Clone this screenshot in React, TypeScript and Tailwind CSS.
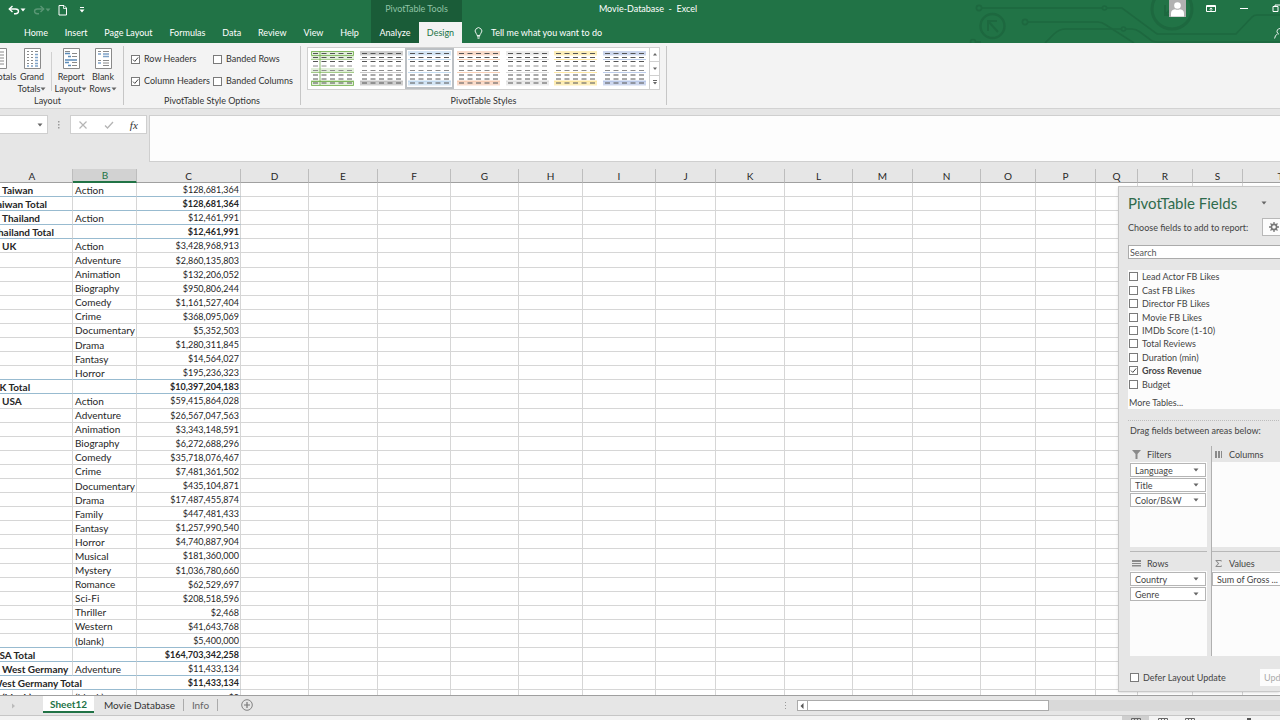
import { ReactNode, useState } from 'react';

type CellRow = {
  country?: string;
  genre?: string;
  value: string;
  total?: boolean;
};

const ROWS: CellRow[] = [
  { country: 'Taiwan', genre: 'Action', value: '$128,681,364' },
  { country: 'Taiwan Total', value: '$128,681,364', total: true },
  { country: 'Thailand', genre: 'Action', value: '$12,461,991' },
  { country: 'Thailand Total', value: '$12,461,991', total: true },
  { country: 'UK', genre: 'Action', value: '$3,428,968,913' },
  { genre: 'Adventure', value: '$2,860,135,803' },
  { genre: 'Animation', value: '$132,206,052' },
  { genre: 'Biography', value: '$950,806,244' },
  { genre: 'Comedy', value: '$1,161,527,404' },
  { genre: 'Crime', value: '$368,095,069' },
  { genre: 'Documentary', value: '$5,352,503' },
  { genre: 'Drama', value: '$1,280,311,845' },
  { genre: 'Fantasy', value: '$14,564,027' },
  { genre: 'Horror', value: '$195,236,323' },
  { country: 'UK Total', value: '$10,397,204,183', total: true },
  { country: 'USA', genre: 'Action', value: '$59,415,864,028' },
  { genre: 'Adventure', value: '$26,567,047,563' },
  { genre: 'Animation', value: '$3,343,148,591' },
  { genre: 'Biography', value: '$6,272,688,296' },
  { genre: 'Comedy', value: '$35,718,076,467' },
  { genre: 'Crime', value: '$7,481,361,502' },
  { genre: 'Documentary', value: '$435,104,871' },
  { genre: 'Drama', value: '$17,487,455,874' },
  { genre: 'Family', value: '$447,481,433' },
  { genre: 'Fantasy', value: '$1,257,990,540' },
  { genre: 'Horror', value: '$4,740,887,904' },
  { genre: 'Musical', value: '$181,360,000' },
  { genre: 'Mystery', value: '$1,036,780,660' },
  { genre: 'Romance', value: '$62,529,697' },
  { genre: 'Sci-Fi', value: '$208,518,596' },
  { genre: 'Thriller', value: '$2,468' },
  { genre: 'Western', value: '$41,643,768' },
  { genre: '(blank)', value: '$5,400,000' },
  { country: 'USA Total', value: '$164,703,342,258', total: true },
  { country: 'West Germany', genre: 'Adventure', value: '$11,433,134' },
  { country: 'West Germany Total', value: '$11,433,134', total: true },
  { country: '(blank)', genre: '(blank)', value: '$0' },
];

const COLUMNS = [
  { name: 'A', width: 73 },
  { name: 'B', width: 64 },
  { name: 'C', width: 104 },
  { name: 'D', width: 68 },
  { name: 'E', width: 69 },
  { name: 'F', width: 73 },
  { name: 'G', width: 68 },
  { name: 'H', width: 64 },
  { name: 'I', width: 73 },
  { name: 'J', width: 60 },
  { name: 'K', width: 69 },
  { name: 'L', width: 68 },
  { name: 'M', width: 60 },
  { name: 'N', width: 68 },
  { name: 'O', width: 55 },
  { name: 'P', width: 60 },
  { name: 'Q', width: 42 },
  { name: 'R', width: 55 },
  { name: 'S', width: 50 },
  { name: 'T', width: 76 },
];

const TABS = ['Home', 'Insert', 'Page Layout', 'Formulas', 'Data', 'Review', 'View', 'Help'];

const FIELDS = [
  'Lead Actor FB Likes',
  'Cast FB Likes',
  'Director FB Likes',
  'Movie FB Likes',
  'IMDb Score (1-10)',
  'Total Reviews',
  'Duration (min)',
  'Gross Revenue',
  'Budget',
];

const STYLES = [
  { name: 'Light green', band: '#e2efda', line: '#70ad47', outlined: true },
  { name: 'Gray', band: '#cfcfcf', line: '#a6a6a6' },
  { name: 'Light blue', band: '#d5e6f5', line: '#9bc2e6' },
  { name: 'Orange', band: '#fadccb', line: '#f4b084' },
  { name: 'Light gray', band: '#ececec', line: '#c9c9c9' },
  { name: 'Gold', band: '#fdeeb9', line: '#ffd966' },
  { name: 'Blue', band: '#cdd7ee', line: '#8ea9db' },
];

function Caret({ className = 'text-[#666]' }: { className?: string }) {
  return (
    <svg viewBox="0 0 6 4" className={`h-1 w-1.5 shrink-0 ${className}`} aria-hidden="true">
      <path d="M0.5 0.5h5L3 3.5z" fill="currentColor" />
    </svg>
  );
}

interface CheckProps {
  label: string;
  defaultChecked?: boolean;
  boldWhenChecked?: boolean;
}

function Check({ label, defaultChecked = false, boldWhenChecked }: CheckProps) {
  const [checked, setChecked] = useState(defaultChecked);
  return (
    <label className={`flex items-center gap-1 whitespace-nowrap ${boldWhenChecked && checked ? 'font-bold' : ''}`}>
      <span className="relative flex h-[9px] w-[9px] shrink-0">
        <input
          type="checkbox"
          checked={checked}
          onChange={e => setChecked(e.target.checked)}
          className="h-[9px] w-[9px] appearance-none border border-[#7a7a7a] bg-white"
        />
        {checked && (
          <svg viewBox="0 0 9 9" className="pointer-events-none absolute inset-0" aria-hidden="true">
            <path d="M2 4.6 3.8 6.4 7.2 2.4" fill="none" stroke="#444" strokeWidth="1" />
          </svg>
        )}
      </span>
      {label}
    </label>
  );
}

function Circuit() {
  return (
    <svg
      viewBox="0 0 320 43"
      className="pointer-events-none absolute top-0 right-0 h-[43px] w-80"
      fill="none"
      stroke="#1d683f"
      strokeWidth="1.6"
      aria-hidden="true"
    >
      <circle cx="19" cy="8" r="2.6" />
      <path d="M22 8h120M147 8h15l35 26h79l16-17q2-2 5-2h23" />
      <circle cx="144.500" cy="8" r="2" />
      <circle cx="32.500" cy="26" r="12" strokeWidth="2.4" />
      <path d="M38 32 28 21M28 31V21h9" strokeWidth="2" />
      <circle cx="65" cy="22" r="2.600" />
      <path d="M68 22h70q4 0 8 3l28 18" />
      <path d="M85 43l9-9q5-5 12-5h55M166 29h6q4 0 8 3l12 9q3 1 6 1h122" />
      <circle cx="163.500" cy="29" r="2" />
      <circle cx="212" cy="9" r="20" strokeWidth="3" />
      <path d="M205 5v10h8M205 15l8-8" strokeWidth="2" />
      <circle cx="13" cy="42" r="2.500" />
      <path d="M16 42h5" />
    </svg>
  );
}

function TitleBar() {
  return (
    <div className="relative flex h-[22px] items-start">
      <div className="flex flex-1 items-center gap-[7px] pt-1 pl-2 text-white">
        <button type="button" aria-label="Undo" className="flex items-center">
          <svg viewBox="0 0 12 10" className="h-2.5 w-3" fill="none" stroke="currentColor">
            <path d="M1.500 4h6q3 0 3 2.300T7.500 8.800H6" strokeWidth="1.400" />
            <path d="M4.500 1 1.300 4l3.200 3" strokeWidth="1.400" />
          </svg>
          <Caret className="text-white" />
        </button>
        <button type="button" aria-label="Redo" className="flex items-center opacity-25">
          <svg viewBox="0 0 12 10" className="h-2.5 w-3" fill="none" stroke="currentColor">
            <path d="M10.500 4h-6q-3 0-3 2.300t3 2.500H6" strokeWidth="1.400" />
            <path d="m7.500 1 3.200 3-3.200 3" strokeWidth="1.400" />
          </svg>
          <Caret className="text-white" />
        </button>
        <button type="button" aria-label="New">
          <svg viewBox="0 0 10 12" className="h-3 w-2.5" fill="none" stroke="currentColor">
            <path d="M1 1.500h5l2.500 2.500v7H1z" />
            <path d="M5.500 1.500V4.500h3" strokeWidth="0.800" />
          </svg>
        </button>
        <button type="button" aria-label="Customize Quick Access Toolbar" className="ml-1">
          <svg viewBox="0 0 6 6" className="h-1.5 w-1.5" fill="currentColor">
            <path d="M1 0h4v1H1zM0.500 2.500h5L3 5.500z" />
          </svg>
        </button>
      </div>
      <h1 className="pr-4 pl-6 text-[9px] leading-[18px] whitespace-pre text-white">Movie-Database  -  Excel</h1>
      <div className="relative z-10 flex flex-1 items-start justify-end text-white">
        <svg viewBox="0 0 17 17" className="mr-5 h-[17px] w-[17px]" role="img" aria-label="Account">
          <path d="M0 0h17v17H0z" fill="#b1b1b1" />
          <circle cx="8.500" cy="5.500" r="3.300" fill="#fff" />
          <path d="M2 16.500v-3q0-4 4-4.300 2.500 1.300 5 0 4 .3 4 4.300v3z" fill="#fff" />
        </svg>
        <button type="button" aria-label="Ribbon Display Options" className="mt-1 mr-6">
          <svg viewBox="0 0 10 9" className="h-[9px] w-2.5" fill="none" stroke="currentColor">
            <path d="M.5 1.500h9v6h-9zM.5 2.500h9" />
            <path d="M5 7V4M3.500 5.300 5 3.900l1.500 1.400" strokeWidth="0.900" />
          </svg>
        </button>
        <button type="button" aria-label="Minimize" className="mt-1 mr-6">
          <svg viewBox="0 0 8 9" className="h-[9px] w-2" stroke="currentColor">
            <path d="M0 4.500h8" />
          </svg>
        </button>
        <button type="button" aria-label="Restore" className="mt-1">
          <svg viewBox="0 0 8 9" className="h-[9px] w-2" fill="none" stroke="currentColor">
            <path d="M1 2.500h5v5H1zM3 2.500v-1.500h5" />
          </svg>
        </button>
      </div>
    </div>
  );
}

function RibbonTabs() {
  return (
    <div className="relative flex h-[21px] items-stretch text-[9px] leading-[21px] text-white">
      <div className="flex w-[371px] shrink-0 justify-between pr-3 pl-6">
        {TABS.map(t => (
          <button key={t} type="button">
            {t}
          </button>
        ))}
      </div>
      <button type="button" className="w-12 shrink-0 bg-[#1a5c38]">
        Analyze
      </button>
      <button type="button" className="w-[43px] shrink-0 bg-[#f3f3f3] text-[#217346]">
        Design
      </button>
      <button type="button" className="ml-3 flex items-center gap-2">
        <svg viewBox="0 0 9 12" className="h-3 w-[9px]" fill="none" stroke="currentColor" strokeWidth="0.900">
          <path d="M3 8.500q0-1.200-.9-2.200A3.300 3.300 0 1 1 6.900 6.300Q6 7.300 6 8.500zM3 9.800h3M3.500 11.200h2" />
        </svg>
        Tell me what you want to do
      </button>
      <div className="flex-1" />
      <button type="button" aria-label="Share" className="relative z-10">
        <svg viewBox="0 0 6 12" className="h-3 w-1.5" fill="none" stroke="currentColor" strokeWidth="0.900">
          <path d="M6 1.500A2.900 2.900 0 0 0 3.500 6L5 7.300M3.500 7Q1 8 .6 11.500" />
        </svg>
      </button>
    </div>
  );
}

function LayoutIcon({ kind }: { kind: 'sub' | 'grand' | 'report' | 'blank' }) {
  return (
    <svg viewBox="0 0 17 21" className="h-[21px] w-[17px]" fill="none" aria-hidden="true">
      <path d="M.5.5h16v20H.5z" fill="#fff" stroke="#8a8a8a" />
      {kind === 'grand' && (
        <>
          <path d="M3 3.500h2M7 3.500h2M11 3.500h3M3 6.500h2M7 6.500h2M3 9.500h2M7 9.500h2M3 12.500h2M7 12.500h2M3 15.500h2M7 15.500h2" stroke="#8a8a8a" />
          <path d="M11 6.500h3M11 9.500h3M11 12.500h3M11 15.500h3M3 18h2M7 18h2M11 18h3" stroke="#7fa3c8" strokeWidth="1.500" />
        </>
      )}
      {kind === 'sub' && <path d="M3 4h11M5 7h9M5 10h9M3 13h11M5 16h9" stroke="#8a8a8a" />}
      {kind === 'report' && (
        <>
          <path d="M2 3.500h5M9 5.500h5M9 8.500h5M9 14.500h5M9 17.500h5" stroke="#8a8a8a" />
          <path d="M2 5.500h5M5 8.500h3M2 12h12M2 14.500h4M5 17.500h3" stroke="#5b8bb8" strokeWidth="1.400" />
        </>
      )}
      {kind === 'blank' && (
        <>
          <path d="M3 3.500h3M8 3.500h6M3 12.500h3M8 12.500h6M8 15h6M8 17.500h6" stroke="#8a8a8a" />
          <path d="M3 6h3M8 6h6M8 8.500h6M3 15h3" stroke="#7fa3c8" strokeWidth="1.300" />
        </>
      )}
    </svg>
  );
}

function LayoutButton({ kind, top, bottom }: { kind: 'sub' | 'grand' | 'report' | 'blank'; top: string; bottom?: string }) {
  return (
    <button
      type="button"
      className={`flex shrink-0 flex-col items-center leading-3 whitespace-nowrap ${kind === 'sub' ? 'w-9' : 'w-8'}`}
    >
      <LayoutIcon kind={kind} />
      <span className="mt-0.5">{top}</span>
      {bottom && (
        <span className="flex items-center">
          {bottom}
          <Caret />
        </span>
      )}
    </button>
  );
}

function RibbonGroup({ title, className, children }: { title: string; className: string; children: ReactNode }) {
  return (
    <section className={`my-[3px] flex shrink-0 flex-col border-r border-[#c6c6c6] ${className}`} aria-label={title}>
      <div className="min-h-0 flex-1">{children}</div>
      <div className="text-center leading-[8px]">{title}</div>
    </section>
  );
}

function StyleThumb({ band, line, outlined }: { band: string; line: string; outlined?: boolean }) {
  const ys = [2.5, 6.5, 10.5, 15, 19.5, 24, 28, 32];
  return (
    <svg viewBox="0 0 43 35" className="h-[35px] w-[43px]" aria-hidden="true">
      <rect width="43" height="4.500" fill={band} />
      <rect y="30" width="43" height="4.500" fill={band} />
      {outlined && <rect y="17" width="43" height="4.500" fill={band} />}
      {outlined && <rect y="5" width="43" height="3" fill={band} />}
      <path d="M0 8.500h43M0 21.500h43M0 30h43" stroke={line} strokeWidth="0.600" />
      {outlined && <path d="M.5.500h42v4H.5zM.5 30.500h42v4H.5zM9 0v34" fill="none" stroke={line} strokeWidth="0.800" />}
      {ys.map((y, i) => (
        <path
          key={y}
          d={`M2 ${y}h5M10.500 ${y}h5M19 ${y}h5M27.500 ${y}h5M36 ${y}h5`}
          stroke={i === 3 || i === 4 ? '#8c8c8c' : '#555'}
        />
      ))}
    </svg>
  );
}

function Ribbon() {
  return (
    <div className="flex h-[66px] shrink-0 overflow-hidden border-b border-[#d2d2d2] bg-[#f3f3f3] text-[9px] text-[#333]">
      <RibbonGroup title="Layout" className="w-[124px] pr-7">
        <div className="-mr-6 flex justify-end pt-0.5">
          <LayoutButton kind="sub" top="Subtotals" />
          <LayoutButton kind="grand" top="Grand" bottom="Totals" />
          <div className="mx-[3px] my-1 w-px shrink-0 bg-[#d0d0d0]" />
          <LayoutButton kind="report" top="Report" bottom="Layout" />
          <LayoutButton kind="blank" top="Blank" bottom="Rows" />
        </div>
      </RibbonGroup>
      <RibbonGroup title="PivotTable Style Options" className="w-[177px]">
        <div className="grid grid-cols-[82px_1fr] gap-y-3 pt-2 pl-[7px] leading-[10px]">
          <Check label="Row Headers" defaultChecked />
          <Check label="Banded Rows" />
          <Check label="Column Headers" defaultChecked />
          <Check label="Banded Columns" />
        </div>
      </RibbonGroup>
      <RibbonGroup title="PivotTable Styles" className="w-[366px] px-1.5">
        <div className="mt-px flex h-[43px] border border-[#d0d0d0] bg-white">
          {STYLES.map((s, i) => (
            <button
              key={s.name}
              type="button"
              aria-label={s.name}
              className={`flex flex-1 items-center justify-center ${i === 2 ? 'bg-white outline-2 -outline-offset-2 outline-[#bcc0c4]' : ''}`}
            >
              <StyleThumb band={s.band} line={s.line} outlined={s.outlined} />
            </button>
          ))}
          <div className="flex w-2.5 flex-col divide-y divide-[#d0d0d0] border-l border-[#d0d0d0]">
            {['M1 4.500h4L3 2z', 'M1 2.500h4L3 5z', 'M1 1h4v1H1zM1 3h4L3 5.500z'].map((d, i) => (
              <button key={d} type="button" aria-label={['Scroll up', 'Scroll down', 'More'][i]} className="flex flex-1 items-center justify-center">
                <svg viewBox="0 0 6 7" className="h-[7px] w-1.5">
                  <path d={d} fill="#666" />
                </svg>
              </button>
            ))}
          </div>
        </div>
      </RibbonGroup>
    </div>
  );
}

function FormulaBar() {
  return (
    <div className="flex h-[60px] shrink-0 items-start pt-1.5 pb-[7px]">
      <div className="flex h-[19px] w-12 items-center justify-end border border-l-0 border-[#cfcfcf] bg-white">
        <input aria-label="Name box" className="w-0 flex-1 outline-none" />
        <button type="button" aria-label="Named ranges" className="mr-1">
          <Caret />
        </button>
      </div>
      <svg viewBox="0 0 2 8" className="mx-2.5 mt-1.5 h-2 w-0.5" fill="#9a9a9a" aria-hidden="true">
        <path d="M0 0h1.500v1.500H0zM0 3h1.500v1.500H0zM0 6h1.500v1.500H0z" />
      </svg>
      <div className="mr-0.5 flex h-[19px] w-[77px] items-center justify-around border border-[#cfcfcf] bg-white">
        <button type="button" aria-label="Cancel">
          <svg viewBox="0 0 8 8" className="h-2 w-2" stroke="#b5b5b5" fill="none" strokeWidth="1.200">
            <path d="m.5.5 7 7M7.500.5l-7 7" />
          </svg>
        </button>
        <button type="button" aria-label="Enter">
          <svg viewBox="0 0 10 8" className="h-2 w-2.5" stroke="#b5b5b5" fill="none" strokeWidth="1.300">
            <path d="m1 4.500 2.500 2.500L9 1" />
          </svg>
        </button>
        <button type="button" className="font-['Liberation_Serif',serif] text-[11px] leading-3 text-[#333] italic">
          fx
        </button>
      </div>
      <textarea aria-label="Formula bar" className="h-[47px] flex-1 resize-none border border-r-0 border-[#cfcfcf] bg-[#fdfdfd] outline-none" />
    </div>
  );
}

function Sheet() {
  return (
    <table className="h-[536px] w-full min-w-[1319px] table-fixed border-separate border-spacing-0 bg-white text-[10px] leading-[12px] text-[#262626]">
      <colgroup>
        {COLUMNS.map(c => (
          <col key={c.name} style={{ width: c.width }} />
        ))}
      </colgroup>
      <thead>
        <tr className="h-3.5">
          {COLUMNS.map(c => (
            <th
              key={c.name}
              scope="col"
              className={
                c.name === 'B'
                  ? 'h-3.5 border-r border-b-2 border-r-[#bdbdbd] border-b-[#217346] bg-[#d2d2d2] p-0 pl-px font-normal text-[#217346]'
                  : 'h-3.5 border-r border-b border-r-[#bdbdbd] border-b-[#a0a0a0] bg-[#e6e6e6] p-0 font-normal first:pr-2'
              }
            >
              {c.name}
            </th>
          ))}
        </tr>
      </thead>
      <tbody>
        {ROWS.map((row, i) => {
          const ruled = row.total || ROWS[i + 1]?.total;
          const line = ruled ? 'border-b-[#98bbd0]' : 'border-b-[#d6d6d6]';
          const wide = row.country === 'West Germany Total';
          return (
            <tr key={i}>
              <td
                colSpan={wide ? 2 : 1}
                className={`h-3.5 border-r border-b border-r-[#d6d6d6] p-0 font-bold whitespace-nowrap ${line} ${row.total ? '-indent-2' : 'indent-0.5'}`}
              >
                {row.country}
              </td>
              {!wide && (
                <td className={`border-r border-b border-r-[#d6d6d6] p-0 pl-0.5 whitespace-nowrap ${line}`}>{row.genre}</td>
              )}
              <td className={`border-r border-b border-r-[#d6d6d6] p-0 pt-px pr-px text-right text-[9px] ${line} ${row.total ? 'font-bold' : ''}`}>
                {row.value}
              </td>
              {COLUMNS.slice(3).map(c => (
                <td key={c.name} className="border-r border-b border-[#d6d6d6] p-0" />
              ))}
            </tr>
          );
        })}
      </tbody>
    </table>
  );
}

interface AreaProps {
  title: string;
  icon: ReactNode;
  items: string[];
}

function Area({ title, icon, items }: AreaProps) {
  return (
    <section className="flex flex-1 flex-col" aria-label={title}>
      <h3 className="flex h-4 shrink-0 items-center gap-1.5 pl-0.5">
        <svg viewBox="0 0 9 9" className="h-[9px] w-[9px]" fill="#8a8a8a" aria-hidden="true">
          {icon}
        </svg>
        {title}
      </h3>
      <div className="flex flex-1 flex-col gap-px bg-[#fcfcfc] pt-px pr-px">
        {items.map(item => (
          <button key={item} type="button" className="flex h-3.5 items-center justify-between border border-[#b5b5b5] bg-white pr-1.5 pl-1 whitespace-nowrap">
            {item}
            <Caret />
          </button>
        ))}
      </div>
    </section>
  );
}

function FieldsPanel() {
  return (
    <aside className="absolute top-[17px] right-0 h-[506px] w-[162px] overflow-hidden border border-r-0 border-[#c8c8c8] bg-[#e6e6e6] text-[9px] leading-[11px] text-[#444] shadow-sm">
      <div className="flex w-[200px] flex-col pl-[9px]">
        <h2 className="mt-1.5 flex items-center gap-6 text-[15px] leading-5 text-[#2f6b4c]">
          PivotTable Fields
          <Caret />
        </h2>
        <div className="mt-[5px] flex h-[18px] items-center justify-between">
          Choose fields to add to report:
          <button type="button" aria-label="Tools" className="flex h-[18px] w-[57px] items-center border border-[#b8b8b8] bg-[#fcfcfc] pl-1.5">
            <svg viewBox="0 0 10 10" className="h-2.5 w-2.5" fill="none" stroke="#777">
              <circle cx="5" cy="5" r="2.600" strokeWidth="1.600" />
              <path d="M5 0v2M5 8v2M0 5h2M8 5h2M1.500 1.500l1.400 1.400M7.100 7.100l1.400 1.400M8.500 1.500 7.100 2.900M2.900 7.100 1.500 8.500" strokeWidth="1.300" />
            </svg>
          </button>
        </div>
        <input
          type="search"
          aria-label="Search"
          placeholder="Search"
          className="mt-[9px] h-3.5 border border-[#ababab] bg-white pl-px text-[9px] outline-none placeholder:text-[#555]"
        />
        <div className="mt-[11px] h-[139px] bg-[#fcfcfc] pl-px">
          <div className="flex h-[121px] flex-col">
            {FIELDS.map(f => (
              <div key={f} className="flex flex-1 items-center">
                <Check label={f} defaultChecked={f === 'Gross Revenue'} boldWhenChecked />
              </div>
            ))}
          </div>
          <a href="#more" className="mt-1.5 block">
            More Tables...
          </a>
        </div>
        <div className="mt-[11px] border-t border-dotted border-[#bcbcbc]" />
        <p className="mt-1 pl-0.5">Drag fields between areas below:</p>
        <div className="mt-2.5 ml-0.5 grid h-[210px] grid-cols-[77px_1fr] grid-rows-[101px_109px]">
          <div className="flex">
            <Area title="Filters" items={['Language', 'Title', 'Color/B&W']} icon={<path d="M0 0h9L5.500 4v5h-2V4z" />} />
          </div>
          <div className="ml-1 flex border-l border-[#b0b0b0]">
            <Area title="Columns" items={[]} icon={<path d="M1 1h2v7H1zM4 1h2v7H4zM7 1h1v7H7z" />} />
          </div>
          <div className="mt-1 flex border-t border-[#b8b8b8] pt-[3px]">
            <Area title="Rows" items={['Country', 'Genre']} icon={<path d="M0 1h9v2H0zM0 4h9v1H0zM0 6h9v1.500H0z" />} />
          </div>
          <div className="ml-1 flex border-l border-[#b0b0b0]">
            <div className="mt-1 flex flex-1 border-t border-[#b8b8b8] pt-[3px]">
              <Area
                title="Values"
                items={['Sum of Gross ...']}
                icon={<path d="M1.500 1h6v1.800H6.800V1.900H3L5.200 4.400 2.900 7.100h4V6.200h.7V8H1.500V7.300L4 4.500 1.500 1.700z" />}
              />
            </div>
          </div>
        </div>
        <div className="mt-3 flex h-[18px] items-center justify-between pl-0.5">
          <Check label="Defer Layout Update" />
          <button type="button" disabled className="h-[17px] w-[59px] bg-[#fcfcfc] pl-1 text-left text-[#aaa]">
            Update
          </button>
        </div>
      </div>
    </aside>
  );
}

function SheetTabs() {
  return (
    <div className="flex h-5 shrink-0 items-stretch border-t border-[#9f9f9f] bg-[#e6e6e6] text-[10px] text-[#333]">
      <div className="flex w-[43px] items-center pl-3">
        <svg viewBox="0 0 4 6" className="h-1.5 w-1" fill="#bbb" aria-hidden="true">
          <path d="M0 .5v5L3 3z" />
        </svg>
      </div>
      <button type="button" className="mb-0.5 w-[51px] border-b-2 border-[#217346] bg-white pt-px font-bold text-[#217346]">
        Sheet12
      </button>
      <div className="mt-0.5 mb-1 flex items-center divide-x divide-[#ababab] leading-3">
        <button type="button" className="w-[90px] pl-0.5">
          Movie Database
        </button>
        <button type="button" className="w-[34px] text-[#666]">
          Info
        </button>
        <button type="button" aria-label="New sheet" className="pl-[23px]">
          <svg viewBox="0 0 12 12" className="h-3 w-3" fill="none" stroke="#777">
            <circle cx="6" cy="6" r="5.300" strokeWidth="0.900" />
            <path d="M6 3v6M3 6h6" strokeWidth="1.200" />
          </svg>
        </button>
      </div>
      <div className="ml-auto flex w-[39%] items-center gap-2.5 pl-1">
        <svg viewBox="0 0 2 8" className="h-2 w-0.5" fill="#9a9a9a" aria-hidden="true">
          <path d="M0 0h1v1H0zM0 3h1v1H0zM0 6h1v1H0z" />
        </svg>
        <div className="flex h-[11px] flex-1 bg-[#d9d9d9]">
          <button type="button" aria-label="Scroll left" className="flex w-[11px] items-center justify-center border border-[#ababab] bg-white">
            <svg viewBox="0 0 4 6" className="h-1.5 w-1" fill="#555">
              <path d="M3.500 0v6L.5 3z" />
            </svg>
          </button>
          <div className="w-1/2 border border-l-0 border-[#ababab] bg-white" />
        </div>
      </div>
    </div>
  );
}

function StatusBar() {
  return (
    <div className="flex h-[5px] shrink-0 justify-end overflow-hidden border-t border-[#c6c6c6] bg-[#f3f3f3] pr-[29px]">
      {[0, 1, 2].map(i => (
        <button
          key={i}
          type="button"
          aria-label={['Normal', 'Page Layout', 'Page Break Preview'][i]}
          className={`flex w-[27px] justify-center pt-0.5 ${i === 0 ? 'bg-[#cfcfcf]' : ''}`}
        >
          <svg viewBox="0 0 10 8" className="h-2 w-2.5" fill="none" stroke="#666">
            <path d="M.5.5h9v7h-9zM.5 3h9M3.500.5v7M6.500.5v7" />
          </svg>
        </button>
      ))}
      <div className="mt-0.5 ml-11 h-2 w-1 bg-[#555]" />
    </div>
  );
}

export default function App() {
  return (
    <div className="flex h-screen flex-col overflow-hidden bg-[#e6e6e6] font-['Lato','Open_Sans',sans-serif]">
      <header className="relative shrink-0 bg-[#217346]">
        <Circuit />
        <div className="absolute top-0 left-[371px] h-[22px] w-[91px] bg-[#1a5c38] text-center text-[9px] leading-[18px] text-[#8fc3a5]">
          PivotTable Tools
        </div>
        <TitleBar />
        <RibbonTabs />
      </header>
      <Ribbon />
      <FormulaBar />
      <main className="relative min-h-0 flex-1 overflow-hidden">
        <Sheet />
        <FieldsPanel />
      </main>
      <SheetTabs />
      <StatusBar />
    </div>
  );
}
